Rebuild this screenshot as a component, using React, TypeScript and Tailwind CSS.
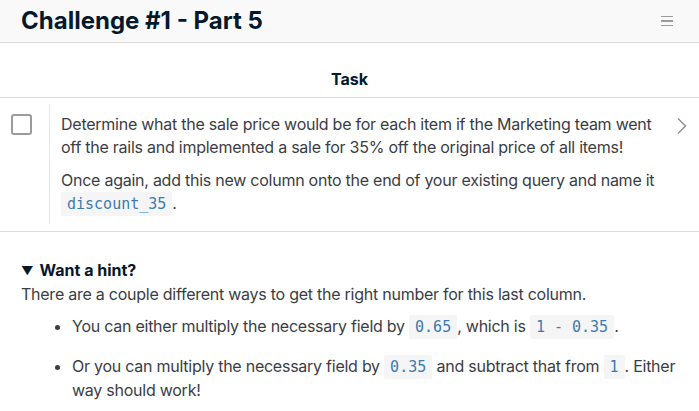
import React from "react";

function Code({ children }: { children: React.ReactNode }) {
  return (
    <code className="rounded-[2px] bg-[#f5f5f5] px-[6px] py-[3px] font-['DejaVu_Sans_Mono',monospace] text-[15px] tracking-normal text-[#3a7bb2]">
      {children}
    </code>
  );
}

export default function App() {
  return (
    <main className="min-h-screen bg-white font-['Inter',sans-serif] text-[16px] tracking-[-0.25px] text-[#3a3d45]">
      <header className="flex h-[43px] items-center justify-between border-b border-[#dcdcdc] bg-[#f9f9f9] pl-[21px] pr-[26px]">
        <h1 className="text-[24px] font-bold tracking-normal text-[#05192d]">Challenge #1 - Part 5</h1>
        <div className="flex w-[12px] flex-col gap-[3px]">
          <span className="h-[1.5px] bg-[#9a9a9a]" />
          <span className="h-[1.5px] bg-[#9a9a9a]" />
          <span className="h-[1.5px] bg-[#9a9a9a]" />
        </div>
      </header>

      <div className="flex h-[55px] items-end justify-center border-b border-[#dcdcdc] pb-[6px] text-[16px] font-bold tracking-normal text-[#05192d]">
        Task
      </div>

      <section className="flex border-b border-[#dcdcdc] py-[7px]">
        <div className="w-[49px] shrink-0 pl-[11px] pt-[9px]">
          <div className="h-[21px] w-[21px] rounded-[3px] border-2 border-[#9b9b9b]" />
        </div>
        <div className="flex-1 border-l border-[#e6e6e6] py-[8px] pl-[11px] pr-[12px] leading-[23px]">
          <p>
            Determine what the sale price would be for each item if the Marketing team went off the rails and
            implemented a sale for 35% off the original price of all items!
          </p>
          <p className="mt-[10px]">
            Once again, add this new column onto the end of your existing query and name it{" "}
            <Code>discount_35</Code>.
          </p>
        </div>
        <div className="w-[30px] shrink-0 pt-[12px] pl-[7px]">
          <svg width="12" height="18" viewBox="0 0 12 18" fill="none" stroke="#8a8a8a" strokeWidth="1.3">
            <path d="M2 1.5 L9.5 9 L2 16.5" />
          </svg>
        </div>
      </section>

      <section className="px-[21px] pt-[27px] leading-[23px]">
        <div className="flex items-center gap-[6px] font-bold tracking-normal text-[#05192d]">
          <span className="text-[12px]">▼</span>
          <span>Want a hint?</span>
        </div>
        <p className="mt-[1px]">There are a couple different ways to get the right number for this last column.</p>
        <ul className="mt-[9px] list-disc pl-[51px]">
          <li>
            You can either multiply the necessary field by <Code>0.65</Code>, which is <Code>1 - 0.35</Code>.
          </li>
          <li className="mt-[16px]">
            Or you can multiply the necessary field by <Code>0.35</Code> and subtract that from <Code>1</Code>.
            Either way should work!
          </li>
        </ul>
      </section>
    </main>
  );
}
